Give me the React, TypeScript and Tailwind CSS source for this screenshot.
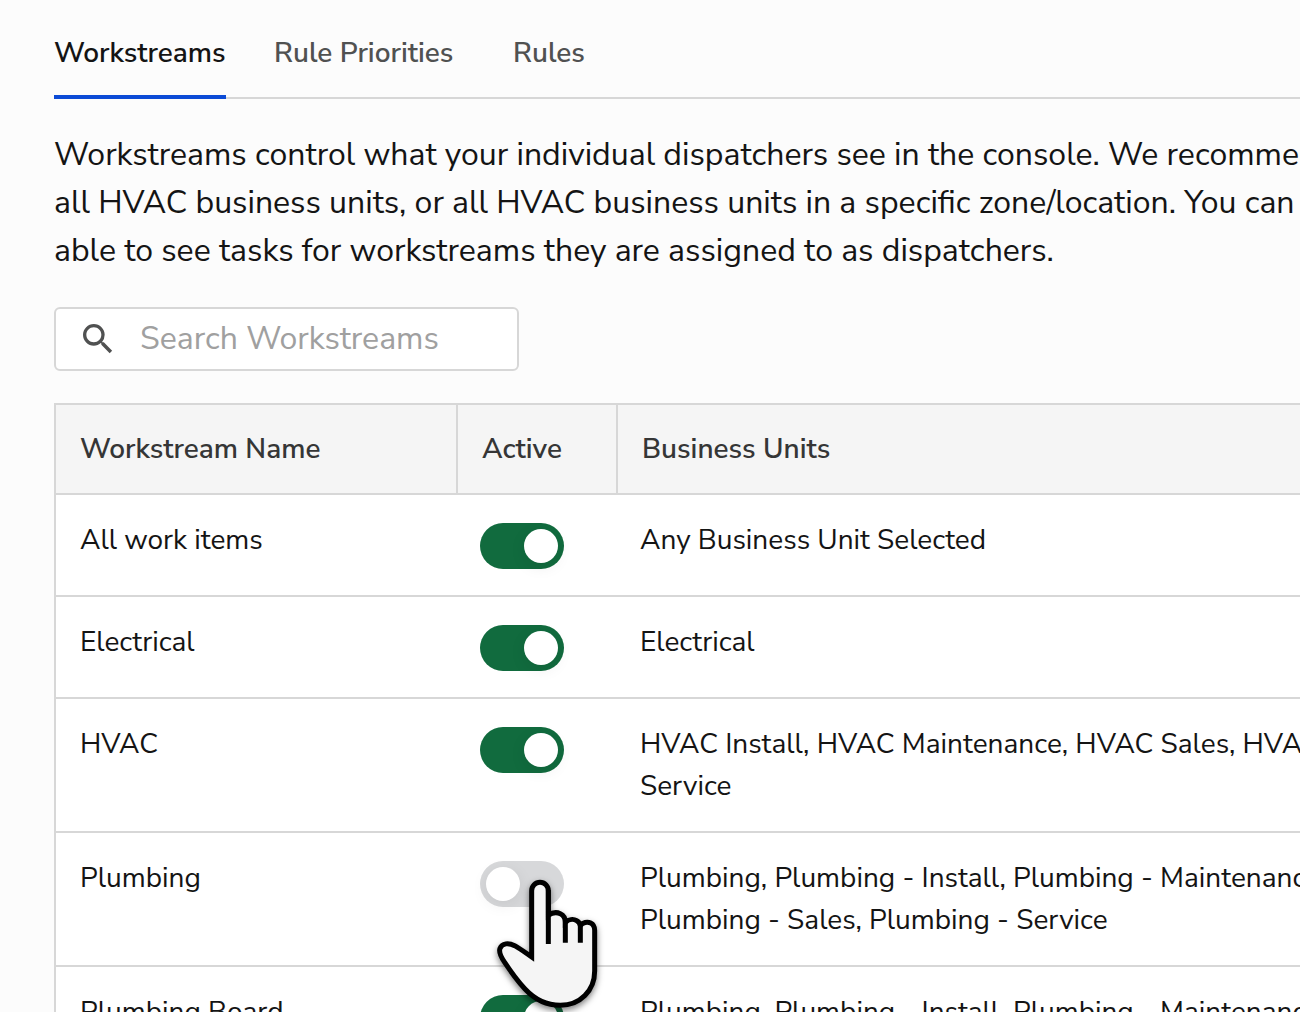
import { FC, useState } from 'react';
import { MdSearch } from 'react-icons/md';

interface Workstream {
  id: string;
  name: string;
  active: boolean;
  units: string;
}

const tabs = [
  { id: 'workstreams', label: 'Workstreams', width: 'w-[172px]' },
  { id: 'priorities', label: 'Rule Priorities', width: 'w-[191px]' },
  { id: 'rules', label: 'Rules', width: 'w-[84px]' },
];

const initialWorkstreams: Workstream[] = [
  { id: 'all', name: 'All work items', active: true, units: 'Any Business Unit Selected' },
  { id: 'electrical', name: 'Electrical', active: true, units: 'Electrical' },
  {
    id: 'hvac',
    name: 'HVAC',
    active: true,
    units: 'HVAC Install, HVAC Maintenance, HVAC Sales, HVAC\nService',
  },
  {
    id: 'plumbing',
    name: 'Plumbing',
    active: false,
    units: 'Plumbing, Plumbing - Install, Plumbing - Maintenance,\nPlumbing - Sales, Plumbing - Service',
  },
  {
    id: 'plumbing-board',
    name: 'Plumbing Board',
    active: true,
    units: 'Plumbing, Plumbing - Install, Plumbing - Maintenance,\nPlumbing - Sales, Plumbing - Service',
  },
];

const HandPointer: FC = () => (
  <svg
    viewBox="99 108 330 420"
    aria-hidden="true"
    className="pointer-events-none absolute top-[15px] left-[13px] z-10 h-[140px] w-[110px] max-w-none overflow-visible drop-shadow-[0_3px_3px_rgba(0,0,0,0.5)]"
  >
    <path
      d="M215 351 V152 A25 25 0 0 1 265 152 V226 C276 218 290 216 301 221 C312 226 316 235 316 247 C326 238 340 236 350 242 C357 246 360 251 361 257 C368 247 382 244 392 249 C400 253 404 261 404 271 V393 C404 452 360 496 301 496 C258 496 222 476 195 447 C173 423 151 393 134 367 C122 350 116 336 120 325 C126 309 146 308 164 317 C182 327 199 340 215 351 Z"
      fill="#f5f5f5"
      stroke="#000"
      strokeWidth="15"
      strokeLinejoin="miter"
    />
    <path d="M265 150 V312 M316 240 V308 M361 250 V308" fill="none" stroke="#000" strokeWidth="15" />
  </svg>
);

interface ToggleProps {
  label: string;
  checked: boolean;
  onChange: () => void;
}

const Toggle: FC<ToggleProps> = ({ label, checked, onChange }) => (
  <input
    type="checkbox"
    role="switch"
    aria-label={label}
    checked={checked}
    onChange={onChange}
    className="flex h-[46px] w-[84px] cursor-pointer appearance-none items-center rounded-full bg-[#d7d8da] px-1.5 before:size-[34px] before:rounded-full before:bg-white before:shadow-[0_4px_16px_rgba(0,0,0,0.08)] checked:justify-end checked:bg-[#116b3e]"
  />
);

const App: FC = () => {
  const [activeTab, setActiveTab] = useState('workstreams');
  const [search, setSearch] = useState('');
  const [workstreams, setWorkstreams] = useState(initialWorkstreams);

  const toggle = (id: string) =>
    setWorkstreams(workstreams.map((w) => (w.id === id ? { ...w, active: !w.active } : w)));

  const visible = workstreams.filter((w) => w.name.toLowerCase().includes(search.toLowerCase()));

  return (
    <div className="h-screen overflow-hidden bg-[#fcfcfc] pl-[54px] font-['Nunito_Sans','Nunito','Open_Sans',sans-serif] text-[28px] text-[#141414]">
      <nav className="flex gap-12 border-b-2 border-[#d7d7d7] pt-8">
        {tabs.map((tab) => (
          <button
            key={tab.id}
            type="button"
            onClick={() => setActiveTab(tab.id)}
            className={`-mb-0.5 border-b-4 pb-[21px] text-left leading-[42px] font-semibold whitespace-nowrap ${tab.width} ${
              activeTab === tab.id ? 'border-[#0c4bd6]' : 'border-transparent text-[#505151]'
            }`}
          >
            {tab.label}
          </button>
        ))}
      </nav>

      <p className="mt-8 text-[32px] leading-[48px] whitespace-nowrap">
        Workstreams control what your individual dispatchers see in the console. We recommend
        <br />
        all HVAC business units, or all HVAC business units in a specific zone/location. You can
        <br />
        able to see tasks for workstreams they are assigned to as dispatchers.
      </p>

      <label className="mt-8 flex h-16 w-[465px] items-center rounded-md border-2 border-[#d7d7d7] bg-white pl-[22px]">
        <MdSearch className="size-10 shrink-0 text-[#505151]" aria-hidden="true" />
        <input
          type="text"
          aria-label="Search Workstreams"
          placeholder="Search Workstreams"
          value={search}
          onChange={(e) => setSearch(e.target.value)}
          className="ml-[22px] min-w-0 flex-1 bg-transparent text-[32px] leading-[48px] outline-none placeholder:text-[#a0a0a0]"
        />
      </label>

      <table className="mt-8 w-full table-fixed border-separate border-spacing-0 border-t-2 border-l-2 border-[#d7d7d7] bg-white">
        <thead>
          <tr className="bg-[#f5f5f5] text-left leading-[42px] text-[#353636]">
            <th className="w-[400px] border-b-2 border-[#d7d7d7] px-6 py-[23px] font-semibold">Workstream Name</th>
            <th className="w-[160px] border-b-2 border-l-2 border-[#d7d7d7] px-6 py-[23px] font-semibold">Active</th>
            <th className="border-b-2 border-l-2 border-[#d7d7d7] px-6 py-[23px] font-semibold">Business Units</th>
          </tr>
        </thead>
        <tbody>
          {visible.map((w) => (
            <tr key={w.id} className="align-top leading-[42px]">
              <td className="border-b-2 border-[#d7d7d7] px-6 py-6">{w.name}</td>
              <td className="border-b-2 border-[#d7d7d7] px-6 pt-7 pb-[26px]">
                <div className="relative">
                  <Toggle label={`${w.name} active`} checked={w.active} onChange={() => toggle(w.id)} />
                  {w.id === 'plumbing' && <HandPointer />}
                </div>
              </td>
              <td className="border-b-2 border-[#d7d7d7] px-6 py-6 whitespace-pre">{w.units}</td>
            </tr>
          ))}
        </tbody>
      </table>
    </div>
  );
};

export default App;
